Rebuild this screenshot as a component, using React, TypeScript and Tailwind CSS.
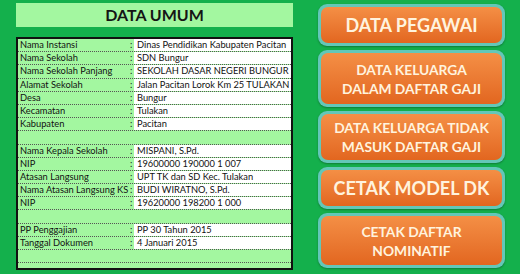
const rows: [string, string][] = [
  ["Nama Instansi", "Dinas Pendidikan Kabupaten Pacitan"],
  ["Nama Sekolah", "SDN Bungur"],
  ["Nama Sekolah Panjang", "SEKOLAH DASAR NEGERI BUNGUR"],
  ["Alamat Sekolah", "Jalan Pacitan Lorok Km 25 TULAKAN"],
  ["Desa", "Bungur"],
  ["Kecamatan", "Tulakan"],
  ["Kabupaten", "Pacitan"],
  ["", ""],
  ["Nama Kepala Sekolah", "MISPANI, S.Pd."],
  ["NIP", "19600000 190000 1 007"],
  ["Atasan Langsung", "UPT TK dan SD Kec. Tulakan"],
  ["Nama Atasan Langsung KS", "BUDI WIRATNO, S.Pd."],
  ["NIP", "19620000 198200 1 000"],
  ["", ""],
  ["PP Penggajian", "PP 30 Tahun 2015"],
  ["Tanggal Dokumen", "4 Januari 2015"],
  ["", ""],
  ["", ""],
];

const buttons = [
  { lines: ["DATA PEGAWAI"], h: "h-[42px]", big: true },
  { lines: ["DATA KELUARGA", "DALAM DAFTAR GAJI"], h: "h-[57px]", big: false },
  { lines: ["DATA KELUARGA TIDAK", "MASUK DAFTAR GAJI"], h: "h-[52px]", big: false },
  { lines: ["CETAK MODEL DK"], h: "h-[42px]", big: true },
  { lines: ["CETAK DAFTAR", "NOMINATIF"], h: "h-[55px]", big: false },
];

const App = () => {
  return (
    <div
      className="w-[520px] h-[274px] bg-[#14b04c] flex overflow-hidden"
      style={{ fontFamily: "Lato, 'Open Sans', sans-serif" }}
    >
      {/* left: data umum */}
      <div className="pl-[16px] pt-[3px] w-[293px] flex flex-col">
        <div className="h-[24px] bg-[#a3f7a0] flex items-center justify-center">
          <span className="font-bold text-[16px] text-[#151515] leading-none">DATA UMUM</span>
        </div>
        <div className="mt-[10px] h-[233px] border-2 border-[#111] bg-[#a3f7a0] overflow-hidden">
          {rows.map(([label, value], i) => {
            const empty = !label;
            return (
              <div
                key={i}
                className="flex h-[13.2px] border-b border-dotted border-[#555] text-[9.3px] leading-[12px] text-[#111]"
              >
                <div className="w-[110px] pl-[2px] whitespace-nowrap">{label}</div>
                <div className="w-[6px] pl-[2px]">{empty ? "" : ":"}</div>
                <div className={`flex-1 pl-[3px] whitespace-nowrap overflow-hidden ${empty ? "" : "bg-white"}`}>
                  {value}
                </div>
              </div>
            );
          })}
        </div>
      </div>

      {/* right: menu buttons */}
      <div className="ml-[25px] pt-[4px] w-[187px] flex flex-col gap-[4px]">
        {buttons.map((b, i) => (
          <div
            key={i}
            className={`${b.h} rounded-[9px] bg-[#63c7b8] p-[3px] shadow-[0_1px_2px_rgba(0,0,0,0.3)]`}
          >
            <div className="h-full rounded-[7px] bg-gradient-to-b from-[#f48f45] to-[#e2661f] flex flex-col items-center justify-center">
              {b.lines.map((l) => (
                <span
                  key={l}
                  className={`font-bold text-[#fff3de] whitespace-nowrap ${
                    b.big ? "text-[18px] leading-[22px]" : "text-[13.8px] leading-[19px]"
                  }`}
                >
                  {l}
                </span>
              ))}
            </div>
          </div>
        ))}
      </div>
    </div>
  );
};

export default App;
